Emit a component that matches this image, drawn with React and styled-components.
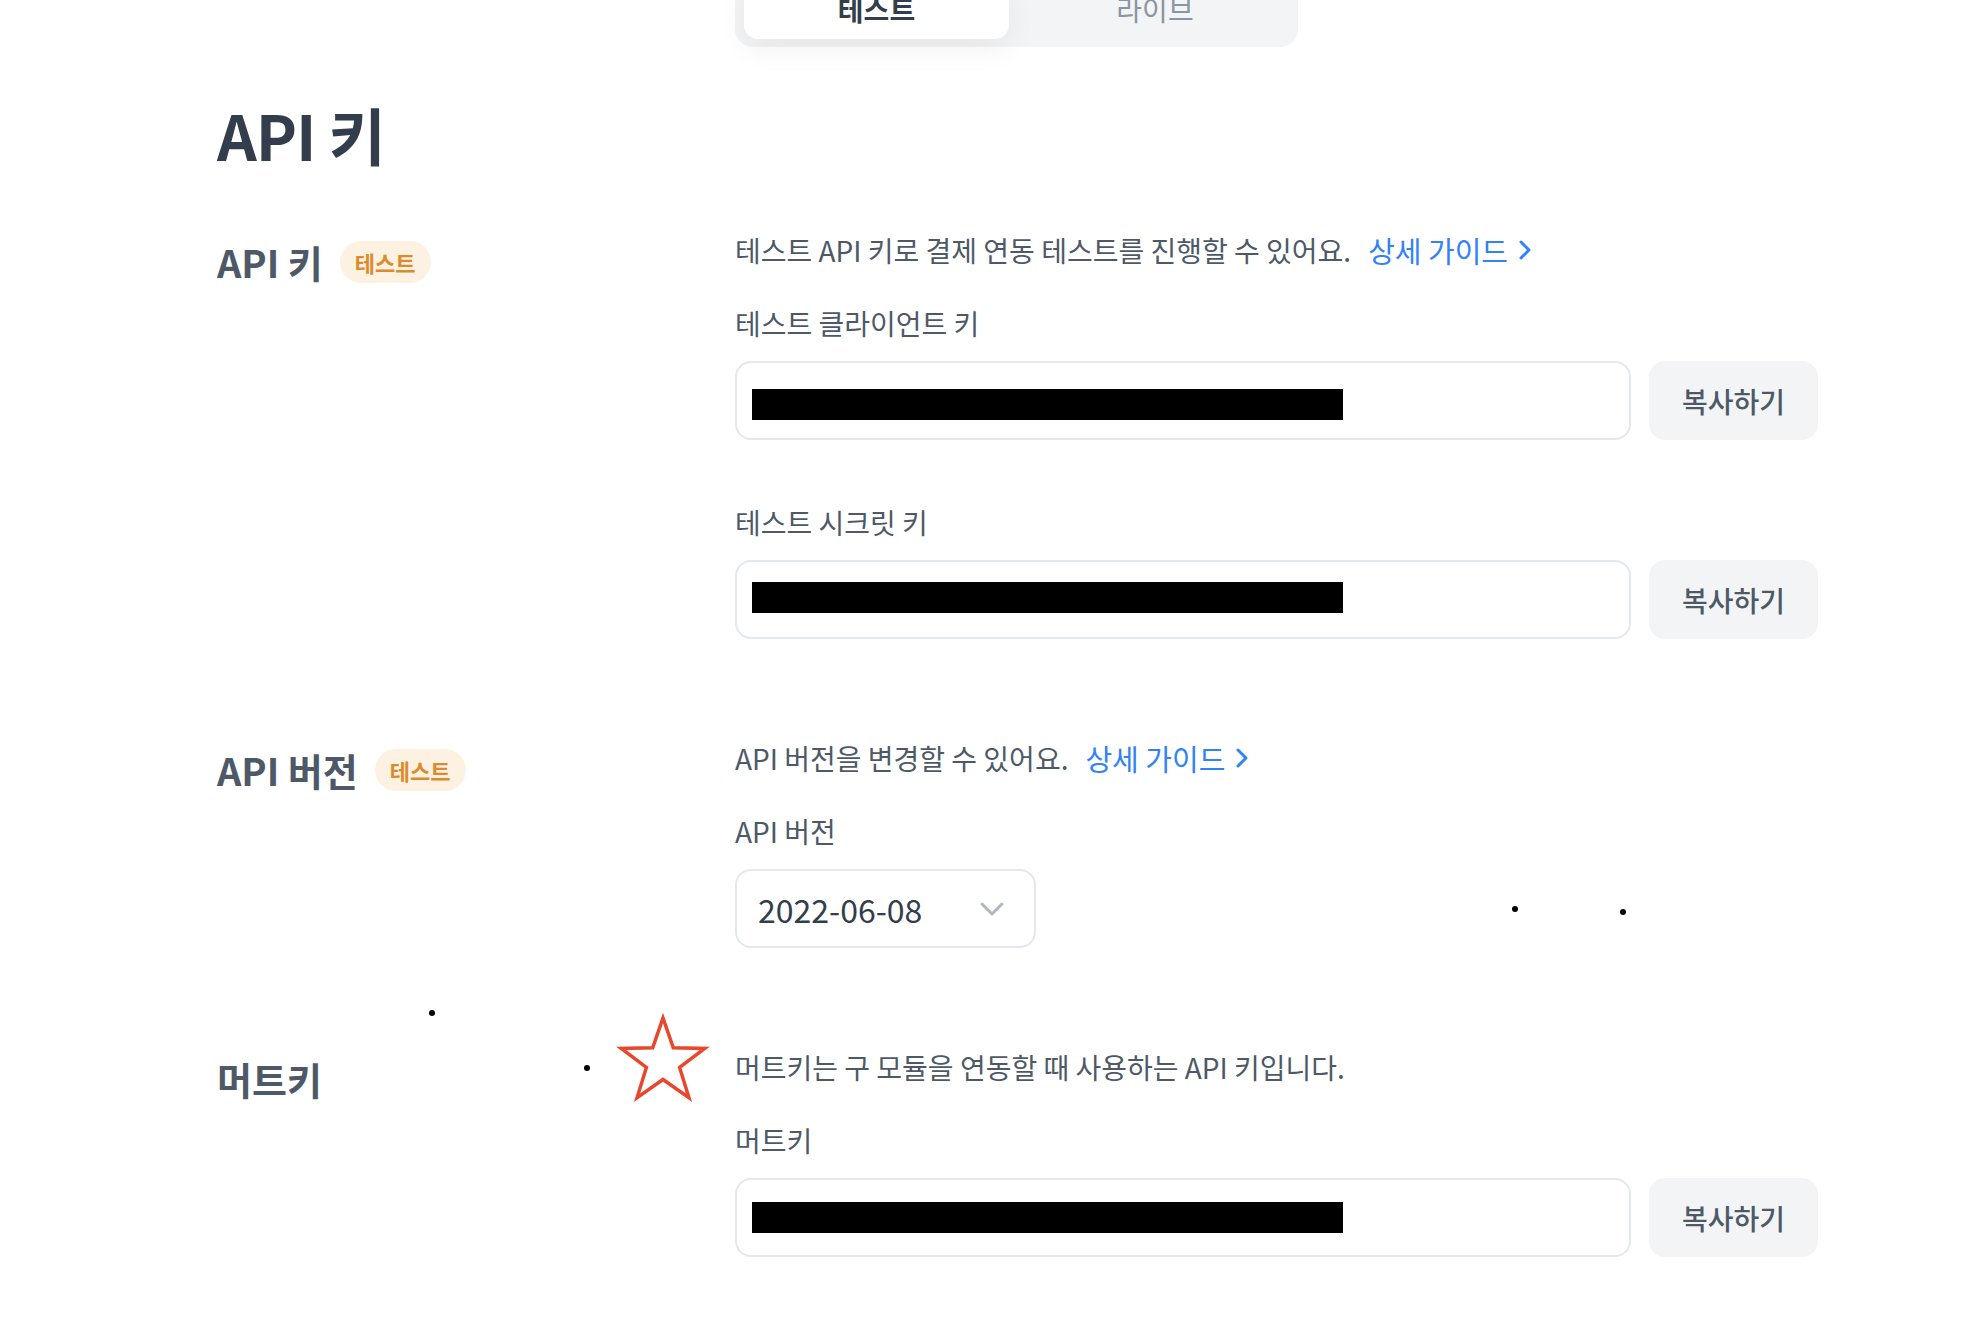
import React from "react";
import styled, { createGlobalStyle } from "styled-components";

const GlobalStyle = createGlobalStyle`
  html, body {
    margin: 0;
    padding: 0;
    background: #ffffff;
  }
  body {
    font-family: "Noto Sans CJK KR", "Noto Sans", sans-serif;
    color: #4e5968;
    overflow: hidden;
  }
`;

const Page = styled.div`
  position: relative;
  width: 1982px;
  height: 1330px;
  overflow: hidden;
  padding-left: 217px;
  box-sizing: border-box;
`;

const TabBar = styled.div`
  margin-left: 518px;
  margin-top: -29px;
  width: 563px;
  height: 76px;
  padding: 8px 9px;
  box-sizing: border-box;
  background: #f2f4f6;
  border-radius: 18px;
  display: flex;
`;

const Tab = styled.div`
  flex: ${(p) => (p.$active ? "0 0 265px" : "1")};
  display: flex;
  align-items: center;
  justify-content: center;
  padding-left: ${(p) => (p.$active ? 0 : 12)}px;
  border-radius: 14px;
  font-size: 28px;
  background: ${(p) => (p.$active ? "#ffffff" : "transparent")};
  color: ${(p) => (p.$active ? "#333d4b" : "#8b95a1")};
  font-weight: ${(p) => (p.$active ? 600 : 400)};
  box-shadow: ${(p) => (p.$active ? "0 10px 30px rgba(0, 0, 0, 0.06)" : "none")};
`;

const Title = styled.h1`
  margin: 50px 0 0;
  font-size: 62px;
  line-height: 74px;
  font-weight: 700;
  color: #333d4b;
  letter-spacing: -1px;
`;

const Section = styled.section`
  display: grid;
  grid-template-columns: 518px 1091px;
  margin-top: ${(p) => p.$top}px;
`;

const SectionHead = styled.div`
  display: flex;
  align-items: center;
  gap: 17px;
  height: 42px;
  padding-top: 9px;
`;

const SectionTitle = styled.h2`
  margin: 0;
  font-size: 38px;
  line-height: 42px;
  font-weight: 700;
  color: #4e5968;
`;

const Badge = styled.span`
  display: inline-flex;
  align-items: center;
  height: 42px;
  padding: 0 15px;
  border-radius: 21px;
  background: #fdf2e1;
  color: #dc8a2e;
  font-size: 22px;
  font-weight: 700;
`;

const Body = styled.div`
  display: flex;
  flex-direction: column;
`;

const Desc = styled.p`
  margin: 0;
  display: flex;
  align-items: center;
  gap: 17px;
  font-size: 28px;
  line-height: 36px;
  color: #4e5968;
`;

const GuideLink = styled.a`
  display: inline-flex;
  align-items: center;
  gap: 10px;
  color: #3182f6;
  text-decoration: none;
  font-size: 29px;
`;

const FieldLabel = styled.div`
  margin-top: ${(p) => p.$gap}px;
  font-size: 28px;
  line-height: 36px;
  color: #4e5968;
`;

const FieldRow = styled.div`
  margin-top: 20px;
  display: flex;
  gap: 18px;
`;

const KeyBox = styled.div`
  width: 896px;
  height: 79px;
  box-sizing: border-box;
  border: 2px solid #e5e8eb;
  border-radius: 16px;
  padding-left: 15px;
  display: flex;
  align-items: center;
`;

const Redacted = styled.div`
  width: 591px;
  height: 31px;
  background: #000000;
  margin-top: ${(p) => p.$shift}px;
`;

const CopyButton = styled.button`
  width: 169px;
  height: 79px;
  border: none;
  border-radius: 16px;
  background: #f2f4f6;
  color: #4e5968;
  font-family: inherit;
  font-size: 28px;
  font-weight: 500;
`;

const Select = styled.div`
  width: 301px;
  height: 79px;
  box-sizing: border-box;
  border: 2px solid #e5e8eb;
  border-radius: 16px;
  padding: 0 29px 0 21px;
  display: flex;
  align-items: center;
  justify-content: space-between;
  font-size: 32px;
  color: #333d4b;
`;

const Dot = styled.span`
  position: absolute;
  left: ${(p) => p.$x}px;
  top: ${(p) => p.$y}px;
  width: 6px;
  height: 6px;
  border-radius: 50%;
  background: #000000;
`;

const StarMark = styled.svg`
  position: absolute;
  left: 613px;
  top: 1012px;
`;

function Chevron() {
  return (
    <svg width="14" height="22" viewBox="0 0 14 22">
      <polyline points="3,3 11,11 3,19" fill="none" stroke="#3182f6" strokeWidth="3" strokeLinecap="round" strokeLinejoin="round" />
    </svg>
  );
}

function KeyField({ label, gap, shift }) {
  return (
    <>
      <FieldLabel $gap={gap}>{label}</FieldLabel>
      <FieldRow>
        <KeyBox>
          <Redacted $shift={shift} />
        </KeyBox>
        <CopyButton>복사하기</CopyButton>
      </FieldRow>
    </>
  );
}

function starPoints(cx, cy, R, r) {
  const pts = [];
  for (let i = 0; i < 10; i++) {
    const rad = i % 2 === 0 ? R : r;
    const a = -Math.PI / 2 + (i * Math.PI) / 5;
    pts.push(`${(cx + rad * Math.cos(a)).toFixed(1)},${(cy + rad * Math.sin(a)).toFixed(1)}`);
  }
  return pts.join(" ");
}

export default function App() {
  return (
    <Page>
      <GlobalStyle />
      <TabBar>
        <Tab $active>테스트</Tab>
        <Tab>라이브</Tab>
      </TabBar>

      <Title>API 키</Title>

      <Section $top={61}>
        <SectionHead>
          <SectionTitle>API 키</SectionTitle>
          <Badge>테스트</Badge>
        </SectionHead>
        <Body>
          <Desc>
            테스트 API 키로 결제 연동 테스트를 진행할 수 있어요.
            <GuideLink>
              상세 가이드 <Chevron />
            </GuideLink>
          </Desc>
          <KeyField label="테스트 클라이언트 키" gap={37} shift={8} />
          <KeyField label="테스트 시크릿 키" gap={64} shift={-4} />
        </Body>
      </Section>

      <Section $top={101}>
        <SectionHead>
          <SectionTitle>API 버전</SectionTitle>
          <Badge>테스트</Badge>
        </SectionHead>
        <Body>
          <Desc>
            API 버전을 변경할 수 있어요.
            <GuideLink>
              상세 가이드 <Chevron />
            </GuideLink>
          </Desc>
          <FieldLabel $gap={37}>API 버전</FieldLabel>
          <FieldRow>
            <Select>
              <span>2022-06-08</span>
              <svg width="26" height="16" viewBox="0 0 26 16">
                <polyline points="3,3 13,13 23,3" fill="none" stroke="#b0b8c1" strokeWidth="3" strokeLinecap="round" strokeLinejoin="round" />
              </svg>
            </Select>
          </FieldRow>
        </Body>
      </Section>

      <Section $top={101}>
        <SectionHead>
          <SectionTitle>머트키</SectionTitle>
        </SectionHead>
        <Body>
          <Desc>머트키는 구 모듈을 연동할 때 사용하는 API 키입니다.</Desc>
          <KeyField label="머트키" gap={37} shift={0} />
        </Body>
      </Section>

      <StarMark width="100" height="96" viewBox="0 0 100 96">
        <polygon points={starPoints(50, 50, 44, 17.5)} fill="none" stroke="#e8472b" strokeWidth="3.5" strokeLinejoin="miter" />
      </StarMark>

      <Dot $x={1512} $y={906} />
      <Dot $x={1620} $y={909} />
      <Dot $x={429} $y={1010} />
      <Dot $x={584} $y={1065} />
    </Page>
  );
}
